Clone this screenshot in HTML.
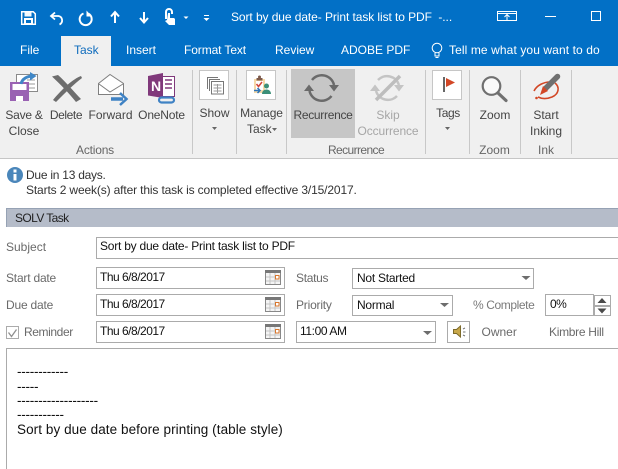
<!DOCTYPE html>
<html><head><meta charset="utf-8">
<style>
html,body{margin:0;padding:0;width:618px;height:469px;overflow:hidden;background:#fff}
body{position:relative;font-family:"Liberation Sans",sans-serif;font-size:12px;color:#444}
.t{position:absolute;white-space:nowrap;line-height:16px;height:16px}
.c{text-align:center;transform:translateX(-50%)}
.w{color:#fff}
.tab{color:#fff;font-size:12px}
.l{color:#6a6a6a}
.g{color:#666}
.k{color:#111}
.d{letter-spacing:-.5px}
.b{position:absolute;box-sizing:border-box;background:#fff;border:1px solid #ababab}
.sep{position:absolute;top:70px;width:1px;height:84px;background:#c8c8c8}
.box{position:absolute;top:70px;width:30px;height:30px;box-sizing:border-box;background:#fff;border:1px solid #c6c6c6}
.m{font-size:13.500px;letter-spacing:-.24px}
svg{position:absolute;overflow:visible}
</style></head><body>
<div style="position:absolute;left:0;top:0;width:618px;height:66px;background:#0270c6"></div>
<div style="position:absolute;left:61px;top:36px;width:50px;height:30px;background:#f0f0f0"></div>
<div style="position:absolute;left:0;top:66px;width:618px;height:92px;background:#f0f0f0"></div>
<div style="position:absolute;left:0;top:158px;width:618px;height:1px;background:#c6c6c6"></div>

<!-- title bar icons -->
<svg style="left:0;top:0" width="618" height="60" fill="none" stroke="#fff">
<path d="M21.700 11.700h11.500l2.100 2.100v10.500H21.700z" stroke-width="1.500"/>
<path d="M24 18h9v6.500h-9z" fill="#fff" stroke="none"/><path d="M26 20h5v3h-5z" fill="#0270c6" stroke="none"/>
<path d="M24.500 12h7v4.500h-7z" fill="#fff" stroke="none" opacity=".95"/>
<path d="M55 12.500l-4 3.500 4 3.500" stroke-width="1.800"/><path d="M51.500 16h7a4.500 4.500 0 0 1 1 8.500" stroke-width="1.800"/>
<path d="M83.500 13.500a6 6 0 1 0 5 .3" stroke-width="2"/><path d="M86.500 10.500v6h5.500z" fill="#fff" stroke="none"/>
<path d="M115 23v-10M111 16.500l4-4.500 4 4.500" stroke-width="2"/>
<path d="M144 12v10M140 18l4 4.500 4-4.500" stroke-width="2"/>
<path d="M166 19v-7a3 3 0 0 1 6 0v2" stroke-width="2"/><path d="M168 13h2v5h4l1 1v6h-6l-4-4 2-1z" fill="#fff" stroke="none"/>
<path d="M183.500 16.500h5l-2.500 2.500z" fill="#fff" stroke="none"/>
<path d="M204 15.500h5" stroke-width="1"/><path d="M203.500 18h6l-3 3z" fill="#fff" stroke="none"/>
<path d="M497.500 11.500h19v9h-19zM497.500 13.500h19" stroke-width="1"/><path d="M507 20v-5M504.500 17l2.500-2.500 2.500 2.500" stroke-width="1"/>
<path d="M545 16.500h11" stroke-width="1"/>
<path d="M591.500 11.500h9v9h-9z" stroke-width="1"/>
<circle cx="437" cy="48" r="4.800" stroke-width="1"/><path d="M435 53v3h4v-3M435.500 57.500h3" stroke-width="1"/>
</svg>
<div class="t w" style="left:231px;top:9px;letter-spacing:-.08px">Sort by due date- Print task list to PDF&nbsp; -...</div>

<div class="t tab" style="left:20px;top:42px">File</div>
<div class="t" style="left:74px;top:42px;color:#0f6cbd">Task</div>
<div class="t tab" style="left:126px;top:42px">Insert</div>
<div class="t tab" style="left:184px;top:42px;letter-spacing:-.1px">Format Text</div>
<div class="t tab" style="left:275px;top:42px">Review</div>
<div class="t tab" style="left:341px;top:42px">ADOBE PDF</div>
<div class="t tab" style="left:449px;top:42px;letter-spacing:.1px">Tell me what you want to do</div>

<!-- ribbon separators -->
<div class="sep" style="left:192px"></div>
<div class="sep" style="left:236px"></div>
<div class="sep" style="left:286px"></div>
<div class="sep" style="left:425px"></div>
<div class="sep" style="left:469px"></div>
<div class="sep" style="left:520px"></div>
<div class="sep" style="left:571px"></div>

<div class="box" style="left:199px"></div>
<div class="box" style="left:246px"></div>
<div class="box" style="left:432px"></div>
<div style="position:absolute;left:291px;top:69px;width:64px;height:69px;background:#c6c6c6"></div>

<!-- ribbon icons -->
<svg style="left:0;top:0" width="618" height="160" fill="none">
<!-- save & close -->
<path d="M16.500 74.500h21v17h-21z" fill="#fff" stroke="#8a8a8a"/>
<path d="M27 80h8M27 84h8M27 88h8" stroke="#999"/>
<path d="M10 82h19v19H10z" fill="#9a62b3"/><path d="M12.500 84h14v6h-14z" fill="#fff"/><path d="M16 96h7v5h-7z" fill="#fff"/>
<path d="M21 84c1-5 6-8 12-8" stroke="#3f87c7" stroke-width="3"/><path d="M30 72l6.500 4-6.500 4.500z" fill="#3f87c7"/>
<!-- delete -->
<path d="M52 76.500L58 75C66 82 74 92 81 99L76 102C68 92 60 84 52 76.500z" fill="#6d6d6d"/>
<path d="M81 76C73 79 63 88 53 100L56 102C66 92 74 84 82 78z" fill="#6d6d6d"/>
<!-- forward -->
<path d="M98.500 83.500l11.500-9 13.500 9v11h-25z" fill="#fff" stroke="#7f7f7f"/>
<path d="M99 84l11 8 13-8" stroke="#7f7f7f"/>
<path d="M111 99h12" stroke="#3f82c4" stroke-width="3.500"/><path d="M120 93l6.500 6-6.500 6" stroke="#3f82c4" stroke-width="2.500"/>
<!-- onenote -->
<path d="M160.500 76.500h14v20h-14z" fill="#fff" stroke="#80397b"/>
<path d="M148 76l15-3v25l-15-2.500z" fill="#80397b"/>
<path d="M165 80h7M165 84h7M165 88h7" stroke="#80397b" stroke-width="1.500"/>
<path d="M168 97.500h-6a2.500 2.500 0 0 0 0 5h4M166 97.500h6a2.500 2.500 0 0 1 0 5h-6" stroke="#3f82c4" stroke-width="2.200" transform="translate(-.5 0)"/>
<!-- show -->
<path d="M207.500 89V77.500H218M209.500 91V79.500H220" stroke="#777"/>
<path d="M211.500 81.500h12v12.500h-12z" fill="#fff" stroke="#777"/>
<path d="M213.500 85h8M213.500 88h8M213.500 91h8M217.500 84v9" stroke="#999"/>
<!-- manage task -->
<path d="M254 79h11v14h-11z" fill="#f6d9a8"/><path d="M256 81h7v9h-7z" fill="#fff"/><path d="M256.500 78h6v2.500h-6z" fill="#7d5a4a"/><circle cx="259.500" cy="77" r="1.500" fill="#7d5a4a"/>
<path d="M256.500 84l2 2.500 3.500-4.500" stroke="#d2453a" stroke-width="1.500"/>
<path d="M254 90.500h6M257.500 88l2.500 2.500-2.500 2.500" stroke="#2e75b6" stroke-width="1.500"/>
<circle cx="266.500" cy="86" r="2.500" fill="#3b8f78"/><path d="M262 94c0-6 9-6 9 0z" fill="#3b8f78"/>
<!-- recurrence -->
<path d="M312 80a12.500 12.500 0 0 1 22 5M331.500 96a12.500 12.500 0 0 1-22-5" stroke="#6a6a6a" stroke-width="2.500"/>
<path d="M329 85h10l-5 6.500zM304 91h10l-5-6.500z" fill="#6a6a6a"/>
<!-- skip -->
<path d="M378 80a12.500 12.500 0 0 1 21 5M397 96a12.500 12.500 0 0 1-21-5" stroke="#c4c4c4" stroke-width="2.500"/>
<path d="M394 85h10l-5 6.500zM370 91h10l-5-6.500z" fill="#c4c4c4"/>
<path d="M376 100l24-24" stroke="#bdbdbd" stroke-width="3.500"/>
<!-- tags -->
<path d="M444 77v15" stroke="#666" stroke-width="2"/><path d="M446 78l9 4.500-9 4.500z" fill="#d24726"/>
<!-- zoom -->
<circle cx="491.500" cy="86" r="8.800" fill="#fafafa" stroke="#707070" stroke-width="2.200"/>
<path d="M498 93l8 7.500" stroke="#707070" stroke-width="3.200" stroke-linecap="round"/>
<!-- inking -->
<path d="M534 91c3-6 10-9 16-9M555 83c5 4 4 11-3 14-5 2-10 2-14 0" stroke="#d24726" stroke-width="1.600"/>
<path d="M557.500 76.500L546 88" stroke="#707070" stroke-width="5.500" stroke-linecap="round"/><path d="M543 86l5 5-8 4z" fill="#d24726"/><circle cx="536.500" cy="98" r="1.300" fill="#d24726"/>
<!-- carets -->
<path d="M212 127h5l-2.500 3zM272 128h5l-2.500 3zM445 127h5l-2.500 3z" fill="#666"/>
</svg>
<div class="t" style="left:151px;top:78px;color:#fff;font-weight:bold;font-size:14px">N</div>

<div class="t c" style="left:24px;top:107px;letter-spacing:-.25px">Save &amp;</div>
<div class="t c" style="left:24px;top:123px">Close</div>
<div class="t c" style="left:66px;top:107px;letter-spacing:-.4px">Delete</div>
<div class="t c" style="left:110.500px;top:107px">Forward</div>
<div class="t c" style="left:161.500px;top:107px;letter-spacing:-.2px">OneNote</div>
<div class="t c g" style="left:95px;top:142px;letter-spacing:-.2px">Actions</div>
<div class="t c" style="left:214.500px;top:105px">Show</div>
<div class="t c" style="left:261.500px;top:105px;letter-spacing:-.1px">Manage</div>
<div class="t" style="left:247px;top:121px">Task</div>
<div class="t c" style="left:323px;top:107px;letter-spacing:-.3px">Recurrence</div>
<div class="t c" style="left:388px;top:107px;color:#a6a6a6">Skip</div>
<div class="t c" style="left:388px;top:123px;color:#a6a6a6;letter-spacing:-.1px">Occurrence</div>
<div class="t c g" style="left:356px;top:142px;letter-spacing:-.6px">Recurrence</div>
<div class="t c" style="left:448px;top:105px;letter-spacing:-.4px">Tags</div>
<div class="t c" style="left:495px;top:107px">Zoom</div>
<div class="t c g" style="left:494.500px;top:142px">Zoom</div>
<div class="t c" style="left:546px;top:107px">Start</div>
<div class="t c" style="left:546px;top:123px">Inking</div>
<div class="t c g" style="left:546px;top:142px">Ink</div>

<!-- info -->
<svg style="left:0;top:0" width="30" height="190">
<circle cx="15" cy="175" r="8" fill="#4a86ba"/>
<rect x="13.500" y="174" width="3" height="6.500" fill="#fff"/><rect x="13.500" y="169.500" width="3" height="3" fill="#fff"/>
</svg>
<div class="t" style="left:26px;top:167px;color:#333;letter-spacing:-.25px">Due in 13 days.</div>
<div class="t" style="left:26px;top:182px;color:#333;letter-spacing:-.14px">Starts 2 week(s) after this task is completed effective 3/15/2017.</div>

<div style="position:absolute;left:6px;top:208px;width:612px;height:19px;box-sizing:border-box;background:#b5bcc9;border-top:1px solid #96a2b4;border-left:1px solid #96a2b4"></div>
<div class="t" style="left:15px;top:210px;color:#222;letter-spacing:-.6px">SOLV Task</div>

<!-- form -->
<div class="t l" style="left:6px;top:239px">Subject</div>
<div class="b" style="left:96px;top:237px;width:530px;height:22px"></div>
<div class="t k" style="left:100px;top:238px;letter-spacing:-.23px">Sort by due date- Print task list to PDF</div>

<div class="t l" style="left:6px;top:270px;letter-spacing:-.2px">Start date</div>
<div class="t l" style="left:6px;top:297px;letter-spacing:-.2px">Due date</div>
<div class="b" style="left:6px;top:326px;width:13px;height:13px"></div>
<svg style="left:0;top:0" width="30" height="345" fill="none"><path d="M8.500 332.500l3 4 5-7" stroke="#909090" stroke-width="1.300"/></svg>
<div class="t l" style="left:24px;top:324px;letter-spacing:-.4px">Reminder</div>

<div class="b" style="left:96px;top:267px;width:189px;height:22px"></div>
<div class="b" style="left:96px;top:294px;width:189px;height:22px"></div>
<div class="b" style="left:96px;top:321px;width:189px;height:22px"></div>
<div class="t k d" style="left:100px;top:269px">Thu 6/8/2017</div>
<div class="t k d" style="left:100px;top:296px">Thu 6/8/2017</div>
<div class="t k d" style="left:100px;top:323px">Thu 6/8/2017</div>
<svg style="left:0;top:0" width="300" height="350">
<g><rect x="265.500" y="270.500" width="15" height="14" fill="#f4f4f4" stroke="#888"/><rect x="265" y="270" width="16" height="3" fill="#777"/><path d="M270 273v11M275 273v11M266 277h14M266 281h14" stroke="#c4c4c4"/><rect x="275.500" y="275.500" width="3.500" height="3.500" fill="#fff" stroke="#d9762b"/></g>
<g transform="translate(0 27)"><rect x="265.500" y="270.500" width="15" height="14" fill="#f4f4f4" stroke="#888"/><rect x="265" y="270" width="16" height="3" fill="#777"/><path d="M270 273v11M275 273v11M266 277h14M266 281h14" stroke="#c4c4c4"/><rect x="275.500" y="275.500" width="3.500" height="3.500" fill="#fff" stroke="#d9762b"/></g>
<g transform="translate(0 54)"><rect x="265.500" y="270.500" width="15" height="14" fill="#f4f4f4" stroke="#888"/><rect x="265" y="270" width="16" height="3" fill="#777"/><path d="M270 273v11M275 273v11M266 277h14M266 281h14" stroke="#c4c4c4"/><rect x="275.500" y="275.500" width="3.500" height="3.500" fill="#fff" stroke="#d9762b"/></g>
</svg>

<div class="t l" style="left:296px;top:270px;letter-spacing:-.3px">Status</div>
<div class="t l" style="left:296px;top:297px;letter-spacing:-.2px">Priority</div>
<div class="b" style="left:352px;top:268px;width:182px;height:21px"></div>
<div class="b" style="left:352px;top:295px;width:101px;height:21px"></div>
<div class="t k" style="left:357px;top:270px;letter-spacing:-.25px">Not Started</div>
<div class="t k" style="left:357px;top:297px;letter-spacing:-.25px">Normal</div>
<div class="t" style="left:473px;top:297px;color:#7a7a7a;letter-spacing:-.4px">% Complete</div>
<div class="b" style="left:545px;top:294px;width:49px;height:22px"></div>
<div class="t k" style="left:550px;top:296px;letter-spacing:-.6px">0%</div>
<div class="b" style="left:594px;top:295px;width:17px;height:11px"></div>
<div class="b" style="left:594px;top:306px;width:17px;height:10px"></div>
<div class="b" style="left:296px;top:321px;width:140px;height:22px"></div>
<div class="t k" style="left:300px;top:323px;letter-spacing:-.4px">11:00 AM</div>
<div class="b" style="left:447px;top:321px;width:23px;height:22px"></div>
<div class="t l" style="left:481.500px;top:324px">Owner</div>
<div class="t l" style="left:549px;top:324px;letter-spacing:-.3px">Kimbre Hill</div>
<svg style="left:0;top:0" width="618" height="350" fill="none">
<path d="M521.500 276h9l-4.500 4zM440 303h9l-4.500 4zM423 331h9l-4.500 4z" fill="#6d6d6d"/>
<path d="M597.500 303l4.500-5 4.500 5zM597.500 308.500h9l-4.500 5z" fill="#4a4a4a"/>
<path d="M453.500 329.500h3l4-3.500v11l-4-3.500h-3z" fill="#c8a84a" stroke="#7c6a2a"/>
<path d="M463 329l2-1M463 332h2.500M463 335l2 1" stroke="#777"/>
</svg>

<!-- body -->
<div style="position:absolute;left:6px;top:348px;width:620px;height:130px;box-sizing:border-box;border:1px solid #ababab"></div>
<div class="t k m" style="left:17px;top:364px">------------</div>
<div class="t k m" style="left:17px;top:379px">-----</div>
<div class="t k m" style="left:17px;top:393px">-------------------</div>
<div class="t k m" style="left:17px;top:407px">-----------</div>
<div class="t k" style="left:17px;top:422px;font-size:13.500px;letter-spacing:.07px">Sort by due date before printing (table style)</div>
</body></html>
